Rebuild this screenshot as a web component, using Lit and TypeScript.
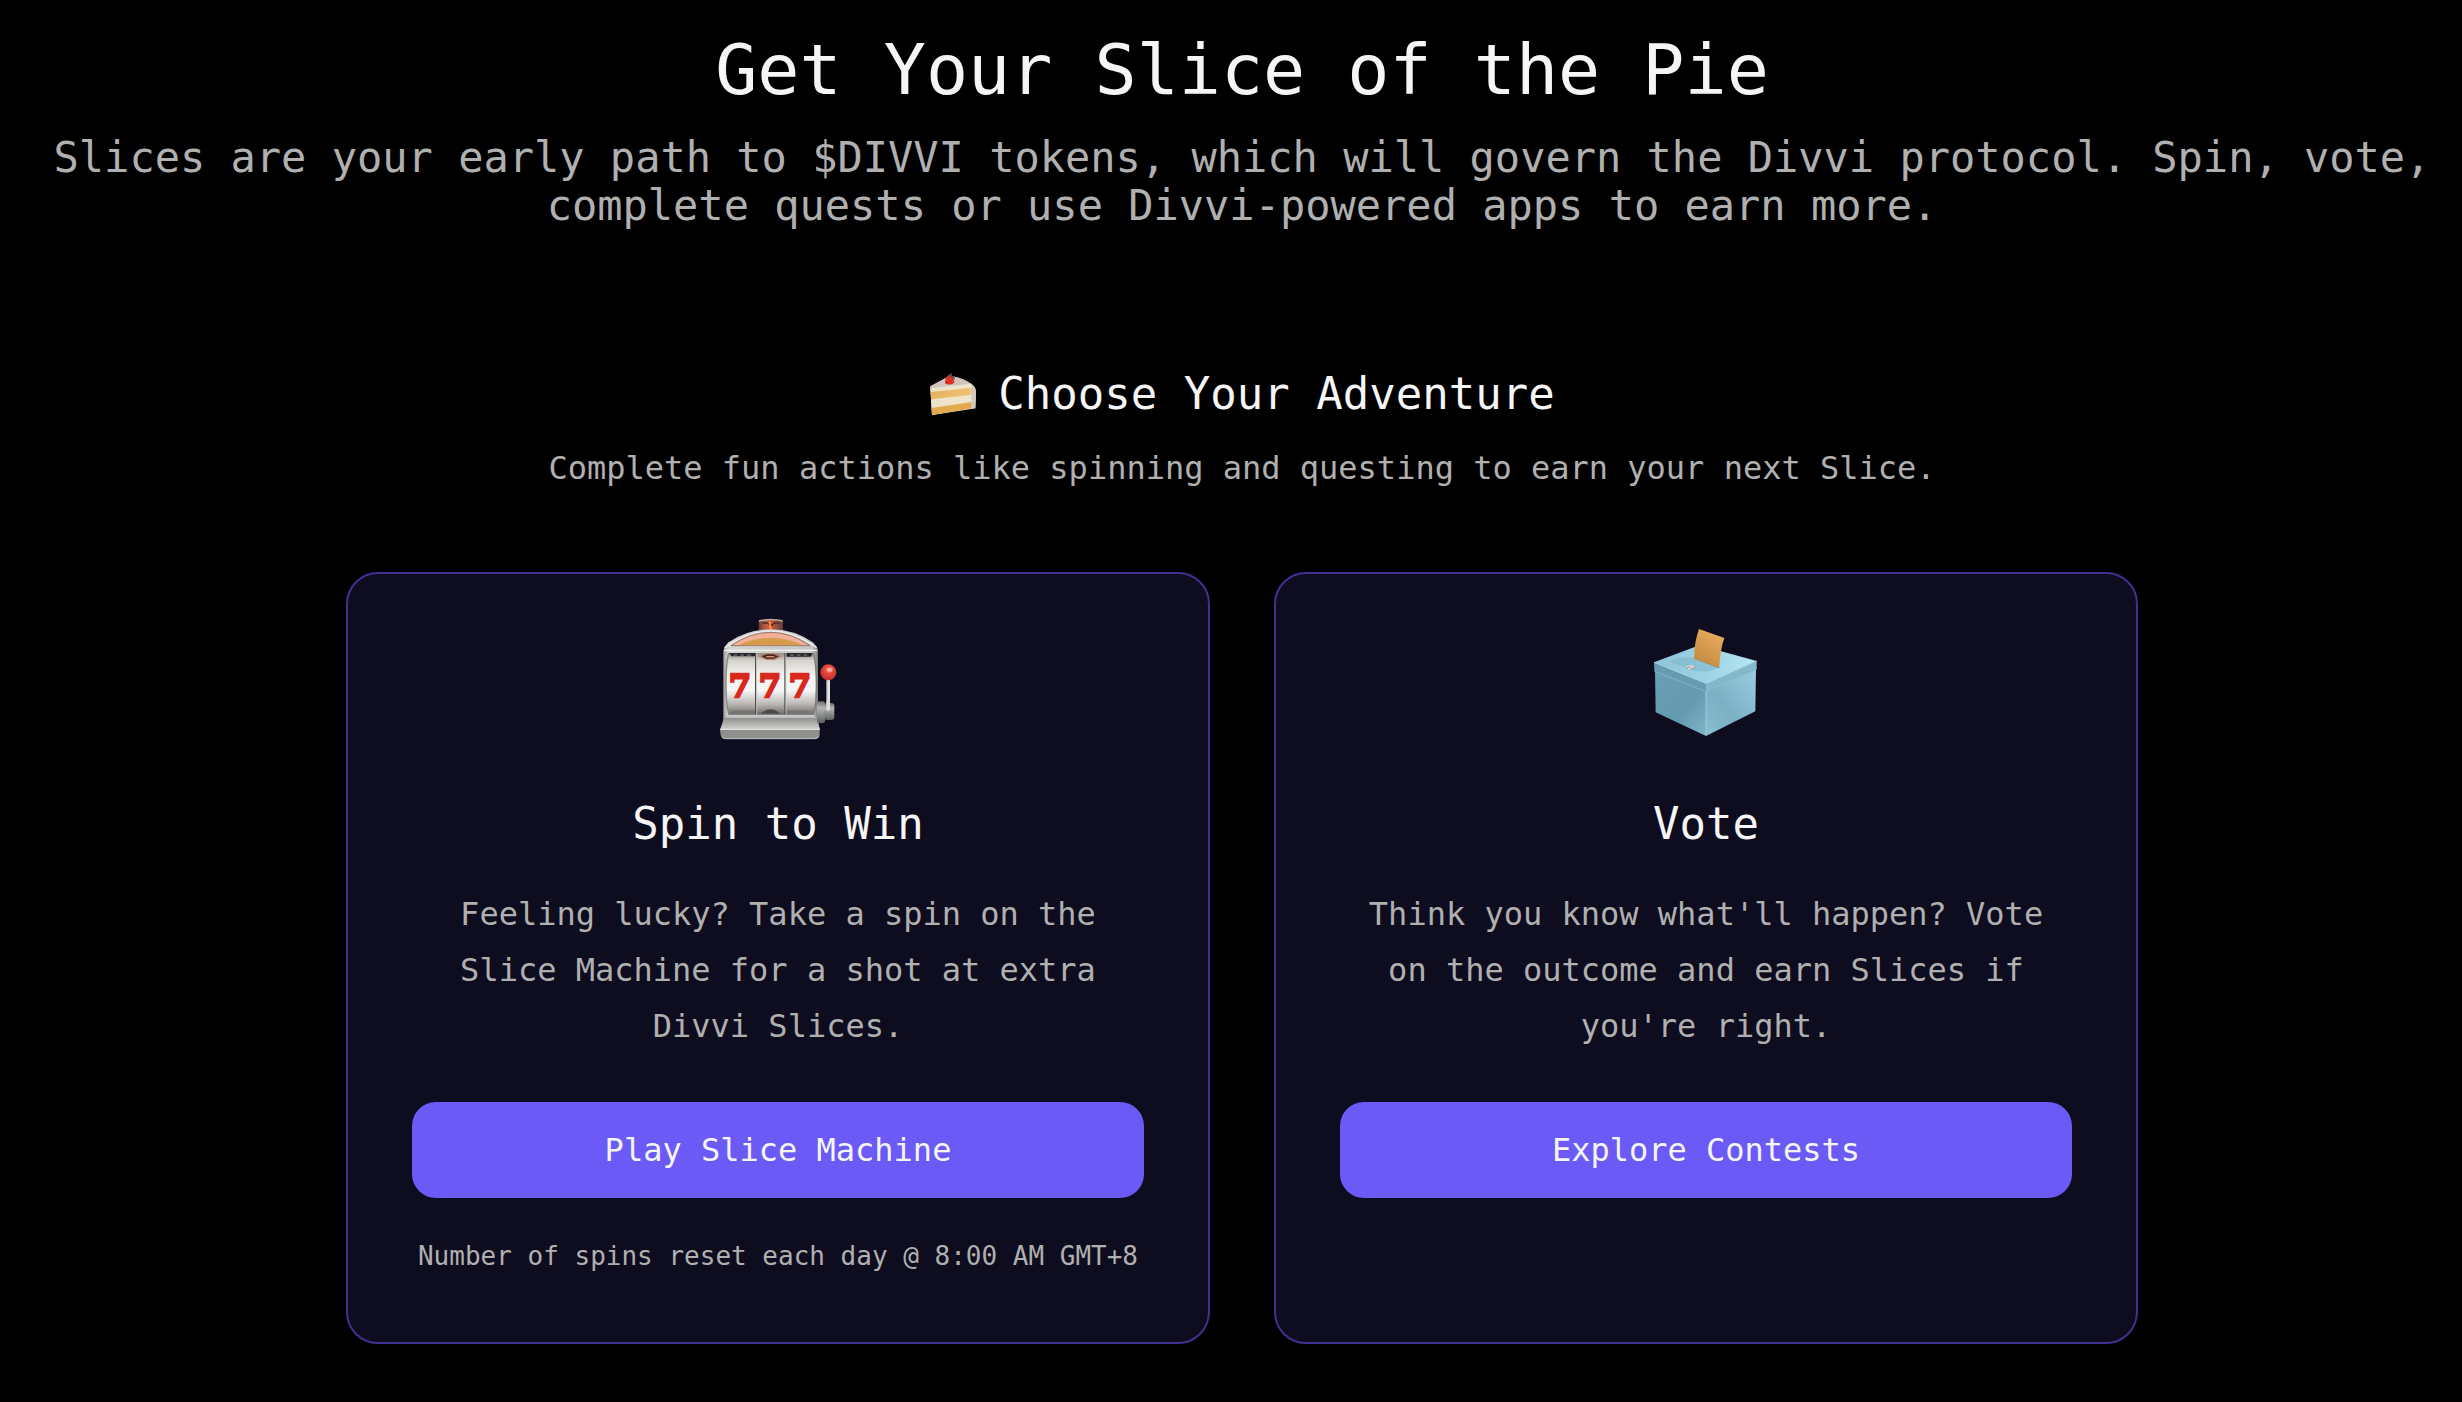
import { LitElement, html, css, svg, type TemplateResult } from "lit";
import { customElement, property } from "lit/decorators.js";

const cake = html`
  <svg class="cake" viewBox="45 33 147 132" aria-hidden="true">
    <defs>
      <linearGradient id="sponge" x1="0" y1="0" x2="1" y2="0">
        <stop offset="0" stop-color="#e5b25c" />
        <stop offset="1" stop-color="#efc277" />
      </linearGradient>
      <linearGradient id="cream" x1="0" y1="0" x2="1" y2="0">
        <stop offset="0" stop-color="#ece2c4" />
        <stop offset="1" stop-color="#f0e6cf" />
      </linearGradient>
    </defs>
    <path d="M49 76 L108 44 Q150 52 172 68 Q186 76 186 98 L184 142 L172 144 L54 162 Z" fill="#e6dccb" />
    <path d="M49 76 L108 44 Q150 52 172 69 Q130 74 49 82 Z" fill="#cfc4bf" />
    <path d="M49 82 L172 68 L173 142 L54 161 Z" fill="url(#cream)" />
    <path d="M50 93 L173 80 L173 101 L51 115 Z" fill="url(#sponge)" />
    <path d="M53 141 L173 123 L173 142 L54 162 Z" fill="#e2a94f" />
    <path d="M172 69 Q187 78 186 98 L184 142 L173 143 Z" fill="#d3c8bb" />
    <path d="M93 62 Q96 46 107 40 Q119 45 121 65 Q106 75 93 67 Z" fill="#d92c20" />
    <path d="M104 43 L113 36 L115 46 L121 46 L123 56 L114 49 Z" fill="#4c4c4a" />
    <path d="M99 57 l2 3 M108 52 l1 4 M106 63 l2 2 M114 60 l1 3" stroke="#f58873" stroke-width="2" />
  </svg>
`;

const sevens = [120, 210, 300].map(
  (x) => svg`<text class="seven" x=${x} y="292" text-anchor="middle">7</text>`,
);

const slotMachine = html`
  <svg class="art" viewBox="54 54 360 366" aria-hidden="true">
    <defs>
      <linearGradient id="drum" x1="0" y1="0" x2="0" y2="1">
        <stop offset="0" stop-color="#8d8d8d" />
        <stop offset="0.12" stop-color="#d6d2cc" />
        <stop offset="0.35" stop-color="#f4f2ef" />
        <stop offset="0.6" stop-color="#f6f6f8" />
        <stop offset="0.82" stop-color="#b9b5b1" />
        <stop offset="1" stop-color="#626262" />
      </linearGradient>
      <linearGradient id="body" x1="0" y1="0" x2="1" y2="0">
        <stop offset="0" stop-color="#9b9c9b" />
        <stop offset="0.05" stop-color="#d4d6d3" />
        <stop offset="0.94" stop-color="#c5c7c5" />
        <stop offset="1" stop-color="#777977" />
      </linearGradient>
      <linearGradient id="base" x1="0" y1="0" x2="0" y2="1">
        <stop offset="0" stop-color="#8d8f8d" />
        <stop offset="1" stop-color="#d4d5d3" />
      </linearGradient>
      <linearGradient id="lamp" x1="0" y1="0" x2="1" y2="0">
        <stop offset="0" stop-color="#6a3b33" />
        <stop offset="0.25" stop-color="#a85c4a" />
        <stop offset="0.45" stop-color="#ee5a32" />
        <stop offset="0.65" stop-color="#a5563f" />
        <stop offset="1" stop-color="#603a34" />
      </linearGradient>
      <linearGradient id="pivot" x1="0" y1="0" x2="0" y2="1">
        <stop offset="0" stop-color="#6e706f" />
        <stop offset="0.3" stop-color="#b4b6b5" />
        <stop offset="1" stop-color="#606261" />
      </linearGradient>
      <radialGradient id="knob" cx="0.55" cy="0.35" r="0.7">
        <stop offset="0" stop-color="#f5a191" />
        <stop offset="0.35" stop-color="#e5483b" />
        <stop offset="1" stop-color="#bb2b24" />
      </radialGradient>
    </defs>
    <rect x="176" y="59" width="73" height="34" rx="5" fill="url(#lamp)" />
    <path d="M177 63 Q212 54 248 63" fill="none" stroke="#b9aaa2" stroke-width="4" />
    <path d="M187 69 h17 l5 6 h8 l5 -6 h16" fill="none" stroke="#4a2a28" stroke-width="4" />
    <path d="M208 66 L213 88" stroke="#f9a347" stroke-width="5" />
    <path d="M70 154 Q72 139 86 127 Q142 88 212 88 Q282 88 338 127 Q353 139 354 154 V362 H70 Z" fill="url(#body)" />
    <path d="M74 143 Q144 93 212 93 Q280 93 350 143" fill="none" stroke="#ecedec" stroke-width="4" />
    <path d="M93 137 Q150 97 212 97 Q274 97 330 137 Z" fill="#f0b099" stroke="#76504a" stroke-width="2" />
    <path d="M115 136 Q160 113 212 113 Q264 113 309 136 Z" fill="#d59c4c" />
    <path d="M72 151 H352" stroke="#f1f2f0" stroke-width="4" />
    <path d="M86 159 H339 Q348 190 348 250 Q348 320 339 347 H88 Q78 320 78 250 Q78 190 86 159 Z" fill="url(#drum)" />
    <path d="M86 159 Q78 190 78 250 Q78 320 88 347" fill="none" stroke="#858785" stroke-width="4" />
    <path d="M340 159 Q349 190 349 250 Q349 320 339 347" fill="none" stroke="#7b7d7b" stroke-width="4" />
    <path d="M88 159 H165 V169 H94 Z M258 159 H338 L333 170 H258 Z" fill="#262528" />
    <path d="M100 165 h12 m8 0 h12 m8 0 h14 M270 165 h12 m8 0 h12 m8 0 h12" stroke="#62616a" stroke-width="5" />
    <path d="M179 169 L199 161 H221 L242 169 L222 178 H199 Z" fill="#3c2b29" stroke="#c3815f" stroke-width="4" />
    <path d="M199 170 H223" stroke="#d99574" stroke-width="4" />
    <path d="M96 335 H165 M258 335 H330" stroke="#77736f" stroke-width="5" />
    <path d="M181 341 Q211 315 241 341 Z" fill="#4c4b4c" />
    <path d="M167 159 V347 M255 159 V347" stroke="#4d4d4d" stroke-width="4" />
    <path d="M170 159 V347 M258 159 V347" stroke="#d9d9d9" stroke-width="2" />
    ${sevens}
    <path d="M88 344 H340 L352 356 H72 Z" fill="#c6c8c5" />
    <path d="M72 353 H352 L360 390 H60 Z" fill="url(#base)" />
    <path d="M60 388 H359 V405 Q357 416 347 416 H74 Q64 416 62 405 Z" fill="#8e908e" />
    <path d="M61 388 H359" stroke="#dfe0de" stroke-width="4" />
    <path d="M66 410 Q69 416 76 416 H345 Q353 416 356 408" fill="none" stroke="#c4c6c4" stroke-width="3" />
    <rect x="379" y="232" width="11" height="98" fill="#c9cbce" />
    <path d="M387 236 V330" stroke="#f1f2f4" stroke-width="4" />
    <rect x="351" y="304" width="24" height="65" rx="6" fill="url(#pivot)" />
    <rect x="373" y="309" width="30" height="51" rx="9" fill="url(#pivot)" />
    <path d="M379 304 H390 V328 Q385 337 379 328 Z" fill="#dedfe1" />
    <circle cx="385" cy="217" r="24" fill="url(#knob)" />
    <ellipse cx="389" cy="209" rx="9" ry="6" fill="#f7b1a4" opacity="0.75" />
  </svg>
`;

const ballotBox = html`
  <svg class="art" viewBox="48 54 360 366" aria-hidden="true">
    <defs>
      <linearGradient id="lid" x1="0" y1="0" x2="1" y2="0">
        <stop offset="0" stop-color="#8dc3d5" />
        <stop offset="0.5" stop-color="#9dd3e4" />
        <stop offset="1" stop-color="#b6e6f4" />
      </linearGradient>
      <linearGradient id="left" x1="0" y1="0" x2="1" y2="1">
        <stop offset="0" stop-color="#6a9fb5" />
        <stop offset="0.6" stop-color="#649ab0" />
        <stop offset="1" stop-color="#80b5c9" />
      </linearGradient>
      <linearGradient id="right" x1="1" y1="0" x2="0" y2="1">
        <stop offset="0" stop-color="#9acde0" />
        <stop offset="0.6" stop-color="#7bafc4" />
        <stop offset="1" stop-color="#8ac0d2" />
      </linearGradient>
      <linearGradient id="ballot" x1="0.8" y1="0" x2="0.3" y2="1">
        <stop offset="0" stop-color="#e9ae61" />
        <stop offset="1" stop-color="#c3893e" />
      </linearGradient>
    </defs>
    <path d="M75 210 L228 268 V408 L77 337 Z" fill="url(#left)" />
    <path d="M228 268 L378 208 L376 334 L228 408 Z" fill="url(#right)" />
    <path d="M72 187 L228 250 V274 L73 213 Z" fill="#659cb3" />
    <path d="M228 250 L380 183 V208 L228 274 Z" fill="#83b8cc" />
    <path d="M72 187 L208 136 L380 183 L228 251 Z" fill="url(#lid)" />
    <path d="M72 187 L228 250 L380 183" fill="none" stroke="#a6d7e7" stroke-width="3" />
    <path d="M74 214 L228 275 L379 209" fill="none" stroke="#8fc0d2" stroke-width="2" />
    <path d="M228 275 V405" stroke="#9acbdc" stroke-width="3" />
    <path d="M118 185 Q155 166 193 174 L266 203 Q230 222 190 211 Z" fill="#79b0c5" opacity="0.45" />
    <path d="M192 174 L268 203" stroke="#54849a" stroke-width="4" />
    <path d="M207 87 L283 114 Q276 133 273 153 L267 203 L192 176 Q193 124 207 87 Z" fill="url(#ballot)" />
    <ellipse cx="181" cy="202" rx="14" ry="6" fill="#a9aaa9" />
    <path d="M169 201 Q177 194 192 199 M174 207 L188 201" fill="none" stroke="#ece9e6" stroke-width="3" />
  </svg>
`;

interface Adventure {
  title: string;
  text: string;
  action: string;
  note?: string;
  art: TemplateResult;
}

const adventures: Adventure[] = [
  {
    title: "Spin to Win",
    text: "Feeling lucky? Take a spin on the Slice Machine for a shot at extra Divvi Slices.",
    action: "Play Slice Machine",
    note: "Number of spins reset each day @ 8:00 AM GMT+8",
    art: slotMachine,
  },
  {
    title: "Vote",
    text: "Think you know what'll happen? Vote on the outcome and earn Slices if you're right.",
    action: "Explore Contests",
    art: ballotBox,
  },
];

@customElement("adventure-card")
export class AdventureCard extends LitElement {
  @property({ attribute: false }) adventure!: Adventure;

  static styles = css`
    :host {
      display: block;
    }
    .card {
      box-sizing: border-box;
      height: 100%;
      display: flex;
      flex-direction: column;
      align-items: center;
      padding: 44px 64px 64px;
      border: 2px solid #3f3290;
      border-radius: 32px;
      background: #0e0c1f;
      text-align: center;
    }
    .art {
      width: 120px;
      height: 122px;
    }
    .seven {
      font: bold 96px "DejaVu Serif", serif;
      fill: #d9291f;
      stroke: #d9291f;
      stroke-width: 7px;
    }
    .title {
      margin: 56px 0 34px;
      font-size: 44px;
      line-height: 56px;
      font-weight: 400;
      color: #f5f5f5;
    }
    .text {
      margin: 0 0 48px;
      font-size: 32px;
      line-height: 56px;
      color: #b0b0b0;
    }
    .action {
      width: 100%;
      height: 96px;
      border: 0;
      border-radius: 24px;
      background: #6b5af6;
      color: #f5f5f5;
      font: inherit;
      font-size: 32px;
      cursor: pointer;
    }
    .note {
      margin: 36px 0 0;
      font-size: 26px;
      line-height: 44px;
      color: #b0b0b0;
    }
  `;

  render() {
    const { title, text, action, note, art } = this.adventure;
    return html`
      <article class="card">
        ${art}
        <h3 class="title">${title}</h3>
        <p class="text">${text}</p>
        <button class="action" type="button">${action}</button>
        ${note ? html`<p class="note">${note}</p>` : null}
      </article>
    `;
  }
}

@customElement("app-root")
export class AppRoot extends LitElement {
  static styles = css`
    :host {
      display: block;
      min-height: 100vh;
      background: #000;
      font-family: "DejaVu Sans Mono", "Liberation Mono", monospace;
    }
    .page {
      padding: 30px 16px 56px 38px;
      text-align: center;
    }
    .headline {
      margin: 0 0 24px;
      font-size: 70px;
      line-height: 80px;
      font-weight: 400;
      color: #f5f5f5;
    }
    .lead {
      margin: 0 0 136px;
      font-size: 42px;
      line-height: 48px;
      color: #b0b0b0;
    }
    .section-title {
      display: flex;
      justify-content: center;
      align-items: center;
      gap: 20px;
      margin: 0 0 18px;
      font-size: 44px;
      line-height: 56px;
      font-weight: 400;
      color: #f5f5f5;
    }
    .cake {
      width: 49px;
      height: 44px;
    }
    .section-text {
      margin: 0 0 76px;
      font-size: 32px;
      line-height: 56px;
      color: #b0b0b0;
    }
    .cards {
      display: grid;
      grid-template-columns: repeat(2, 1fr);
      gap: 64px;
      max-width: 1792px;
      margin: 0 auto;
    }
  `;

  render() {
    return html`
      <main class="page">
        <h1 class="headline">Get Your Slice of the Pie</h1>
        <p class="lead">
          Slices are your early path to $DIVVI tokens, which will govern the
          Divvi protocol. Spin, vote, complete quests or use Divvi-powered apps
          to earn more.
        </p>
        <section>
          <h2 class="section-title">${cake}<span>Choose Your Adventure</span></h2>
          <p class="section-text">
            Complete fun actions like spinning and questing to earn your next
            Slice.
          </p>
          <div class="cards">
            ${adventures.map(
              (a) => html`<adventure-card .adventure=${a}></adventure-card>`,
            )}
          </div>
        </section>
      </main>
    `;
  }
}
